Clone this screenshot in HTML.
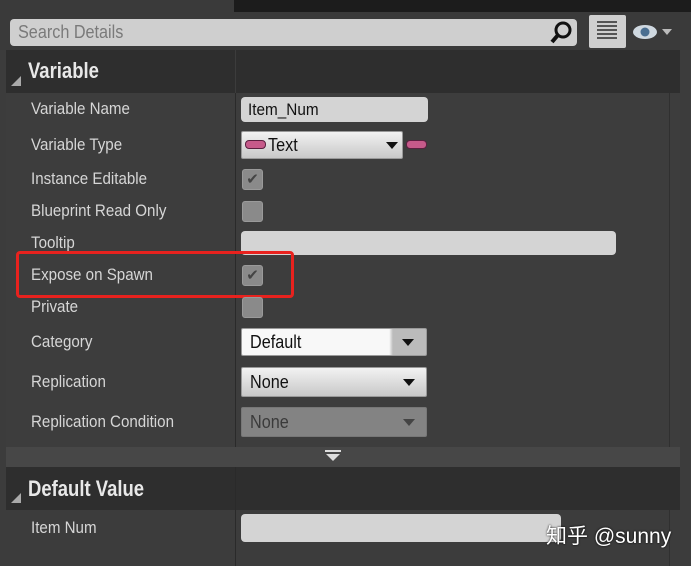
<!DOCTYPE html>
<html><head><meta charset="utf-8"><style>
body{margin:0;width:691px;height:566px;overflow:hidden;background:#3c3c3c;font-family:"Liberation Sans",sans-serif;position:relative}
div,span{position:absolute;box-sizing:border-box}
.lbl{left:31px;color:#d6d6d6;font-size:17px;line-height:20px;transform:scaleX(0.89);transform-origin:left}
.cb{left:242px;width:21px;height:21px;background:#8a8a8a;border-radius:3px;border:1px solid #9a9a9a}
.tb{background:#d4d4d4;border-radius:4px}
.dd{left:241px;width:186px;border-radius:2px;background:linear-gradient(#f2f2f2,#c8c8c8);border:1px solid #999;color:#111;font-size:18px;padding-left:8px}
.arr{width:0;height:0;border-left:6px solid transparent;border-right:6px solid transparent;border-top:7px solid #111}
.hdr{left:6px;width:674px;height:43px;background:#2e2e2e}
.ht{left:28px;color:#e8e8e8;font-size:22px;font-weight:bold;transform:scaleX(0.84);transform-origin:left}
.tri{left:11px;width:0;height:0;border-left:10px solid transparent;border-bottom:10px solid #aaa}
</style></head><body>
<div style="left:0;top:0;width:691px;height:12px;background:#1c1c1c"></div>
<div style="left:0;top:0;width:234px;height:12px;background:#3a3a3a"></div>
<div style="left:0;top:12px;width:691px;height:38px;background:#3a3a3a"></div>
<div class="tb" style="left:10px;top:19px;width:567px;height:27px;background:#cfcfcf;color:#7a7a7a;font-size:18px;line-height:27px;padding-left:8px"><span style="position:static;display:inline-block;transform:scaleX(0.9);transform-origin:left">Search Details</span></div>
<svg style="position:absolute;left:549px;top:20px" width="24" height="24"><circle cx="14" cy="10" r="7" fill="none" stroke="#111" stroke-width="3"/><line x1="9" y1="15" x2="3" y2="22" stroke="#111" stroke-width="4"/></svg>
<div style="left:589px;top:15px;width:37px;height:33px;background:#cfcfcf;border-radius:2px"></div>
<svg style="position:absolute;left:597px;top:20px" width="20" height="22"><g fill="#555"><rect x="0" y="1" width="20" height="2"/><rect x="0" y="5" width="20" height="2"/><rect x="0" y="9" width="20" height="2"/><rect x="0" y="13" width="20" height="2"/><rect x="0" y="17" width="20" height="2"/></g></svg>
<svg style="position:absolute;left:632px;top:22px" width="50" height="20"><ellipse cx="13" cy="10" rx="12" ry="7" fill="#cfd8e0"/><circle cx="13" cy="10" r="4.5" fill="#4a6e90"/><path d="M30 7 L40 7 L35 13 Z" fill="#bbb"/></svg>
<div style="left:6px;top:50px;width:674px;height:397px;background:#3d3d3d"></div>
<div style="left:235px;top:50px;width:1px;height:397px;background:#2a2a2a"></div>
<div style="left:669px;top:50px;width:1px;height:516px;background:#303030"></div>
<div class="hdr" style="top:50px"></div>
<div style="left:235px;top:50px;width:1px;height:43px;background:#3c3c3c"></div>
<div class="tri" style="top:76px"></div>
<div class="ht" style="top:58px">Variable</div>
<div class="lbl" style="top:99px">Variable Name</div>
<div class="tb" style="left:241px;top:97px;width:187px;height:25px;color:#111;font-size:17px;line-height:25px;padding-left:7px"><span style="position:static;display:inline-block;transform:scaleX(0.9);transform-origin:left">Item_Num</span></div>
<div class="lbl" style="top:135px">Variable Type</div>
<div class="dd" style="top:131px;width:162px;height:28px;line-height:26px;padding-left:26px"><span style="position:static;display:inline-block;transform:scaleX(0.9);transform-origin:left">Text</span></div>
<div style="left:245px;top:140px;width:21px;height:9px;background:#c65a8a;border-radius:4px;border:1px solid #5a2040"></div>
<div class="arr" style="left:386px;top:142px"></div>
<div style="left:406px;top:140px;width:21px;height:9px;background:#c65a8a;border-radius:4px;border:1px solid #5a2040"></div>
<div class="lbl" style="top:169px">Instance Editable</div>
<div class="cb" style="top:169px;color:#444;font-size:15px;text-align:center;line-height:19px">✔</div>
<div class="lbl" style="top:201px">Blueprint Read Only</div>
<div class="cb" style="top:201px"></div>
<div class="lbl" style="top:233px">Tooltip</div>
<div class="tb" style="left:241px;top:231px;width:375px;height:24px"></div>
<div class="lbl" style="top:265px">Expose on Spawn</div>
<div class="cb" style="top:265px;color:#444;font-size:15px;text-align:center;line-height:19px">✔</div>
<div style="left:16px;top:251px;width:278px;height:47px;border:3px solid #e8221e;border-radius:4px"></div>
<div class="lbl" style="top:297px">Private</div>
<div class="cb" style="top:297px"></div>
<div class="lbl" style="top:332px">Category</div>
<div class="dd" style="top:328px;height:28px;line-height:26px;background:linear-gradient(90deg,#f8f8f8 80%,#bbb 82%)"><span style="position:static;display:inline-block;transform:scaleX(0.9);transform-origin:left">Default</span></div>
<div class="arr" style="left:402px;top:339px"></div>
<div class="lbl" style="top:372px">Replication</div>
<div class="dd" style="top:367px;height:30px;line-height:28px"><span style="position:static;display:inline-block;transform:scaleX(0.9);transform-origin:left">None</span></div>
<div class="arr" style="left:403px;top:379px"></div>
<div class="lbl" style="top:412px">Replication Condition</div>
<div class="dd" style="top:407px;height:30px;line-height:28px;background:#838383;border-color:#777;color:#3a3a3a"><span style="position:static;display:inline-block;transform:scaleX(0.9);transform-origin:left">None</span></div>
<div class="arr" style="left:403px;top:419px;border-top-color:#444"></div>
<div style="left:6px;top:447px;width:674px;height:20px;background:#474747"></div>
<div style="left:325px;top:450px;width:16px;height:2px;background:#ddd"></div>
<div class="arr" style="left:326px;top:454px;border-top-color:#ddd;border-left-width:7px;border-right-width:7px"></div>
<div class="hdr" style="top:467px"></div>
<div style="left:235px;top:467px;width:1px;height:99px;background:#2a2a2a"></div>
<div class="tri" style="top:493px"></div>
<div class="ht" style="top:476px">Default Value</div>
<div class="lbl" style="top:518px">Item Num</div>
<div class="tb" style="left:241px;top:514px;width:320px;height:28px"></div>
<div style="left:546px;top:520px;color:#fff;font-size:21px;font-family:'Liberation Sans','Noto Sans CJK SC',sans-serif;text-shadow:0 0 2px #000">知乎 @sunny</div>
</body></html>
